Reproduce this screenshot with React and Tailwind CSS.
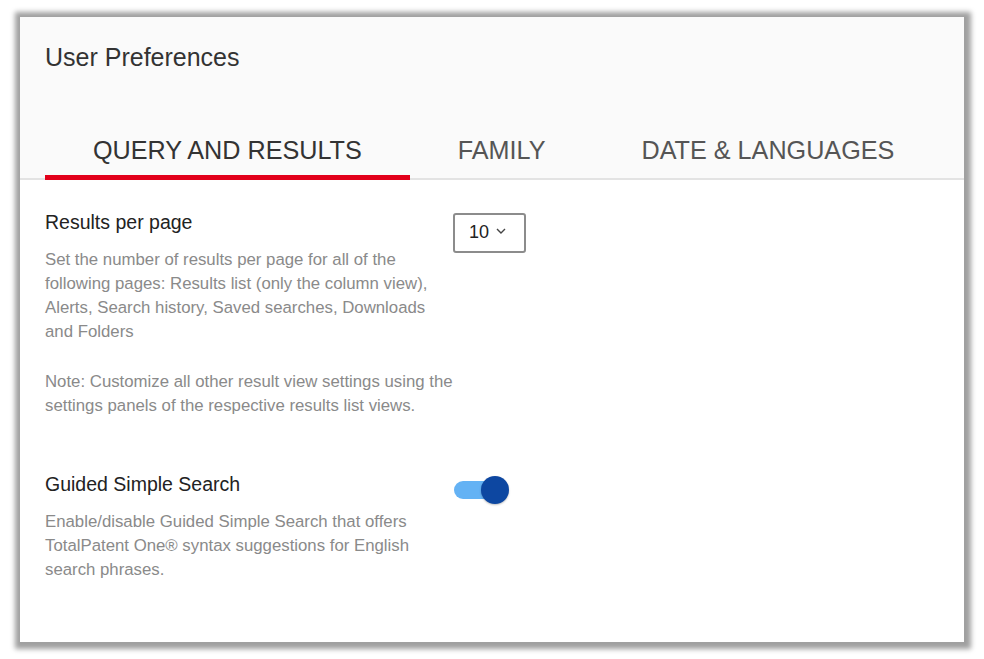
import { useState } from 'react';

const tabs = ['QUERY AND RESULTS', 'FAMILY', 'DATE & LANGUAGES'];

function Toggle({ on, onChange }) {
  return (
    <button onClick={() => onChange(!on)} className="relative mt-[3.5px] ml-[1px] h-[28px] w-[56px]">
      <span className={`absolute left-0 top-[5px] h-[18px] w-[50px] rounded-full ${on ? 'bg-[#64b2f4]' : 'bg-[#bdbdbd]'}`} />
      <span className={`absolute top-0 h-[28px] w-[28px] rounded-full shadow-[0_1px_2px_rgba(0,0,0,0.25)] ${on ? 'left-[27px] bg-[#0d47a1]' : 'left-0 bg-[#f5f5f5]'}`} />
    </button>
  );
}

export default function App() {
  const [active, setActive] = useState(0);
  const [perPage] = useState(10);
  const [guided, setGuided] = useState(true);

  return (
    <div className="min-h-screen bg-white pl-[20px] pt-[17px]" style={{ fontFamily: '"Liberation Sans", Arial, sans-serif' }}>
      <div className="w-[944px] h-[625px] bg-white shadow-[1px_1px_5px_6px_#a0a0a0]">
        <div className="bg-[#fafafa] px-[25px] pt-[25px] border-b-2 border-[#e3e3e3]">
          <h1 className="text-[25px] leading-[30px] text-[#333]">User Preferences</h1>
          <div className="flex mt-[63px] -mb-[2px]">
            {tabs.map((t, i) => (
              <button
                key={t}
                onClick={() => setActive(i)}
                className={`shrink-0 whitespace-nowrap px-[48px] pb-[10px] text-[25.2px] leading-[30px] border-b-[5px] ${i === active ? 'border-[#e2001a] text-[#333]' : 'border-transparent text-[#555]'}`}
              >
                {t}
              </button>
            ))}
          </div>
        </div>

        <div className="px-[25px] pt-[30px]">
          <div className="flex">
            <div className="w-[408px]">
              <h2 className="text-[19.5px] leading-[24px] text-[#222]">Results per page</h2>
              <p className="w-[410px] mt-[14px] text-[16.8px] leading-[24px] text-[#8a8a8a]">
                Set the number of results per page for all of the following pages: Results list (only the column view), Alerts, Search history, Saved searches, Downloads and Folders
              </p>
              <p className="w-[412px] mt-[26px] text-[16.8px] leading-[24px] text-[#8a8a8a]">
                Note: Customize all other result view settings using the settings panels of the respective results list views.
              </p>
            </div>
            <div>
              <button className="mt-[2.5px] flex items-center h-[40px] w-[73px] border-2 border-[#8c8c8c] rounded-[3px] pl-[14px] bg-white">
                <span className="text-[18px] text-[#222]">{perPage}</span>
                <svg width="10" height="6" viewBox="0 0 10 6" className="ml-[7px] mb-[4px]" fill="none" stroke="#444" strokeWidth="1.4">
                  <path d="M1 1l4 4 4-4" />
                </svg>
              </button>
            </div>
          </div>

          <div className="flex mt-[54px]">
            <div className="w-[408px]">
              <h2 className="text-[19.5px] leading-[24px] text-[#222]">Guided Simple Search</h2>
              <p className="w-[412px] mt-[14px] text-[16.8px] leading-[24px] text-[#8a8a8a]">
                Enable/disable Guided Simple Search that offers TotalPatent One® syntax suggestions for English search phrases.
              </p>
            </div>
            <div>
              <Toggle on={guided} onChange={setGuided} />
            </div>
          </div>
        </div>
      </div>
    </div>
  );
}
